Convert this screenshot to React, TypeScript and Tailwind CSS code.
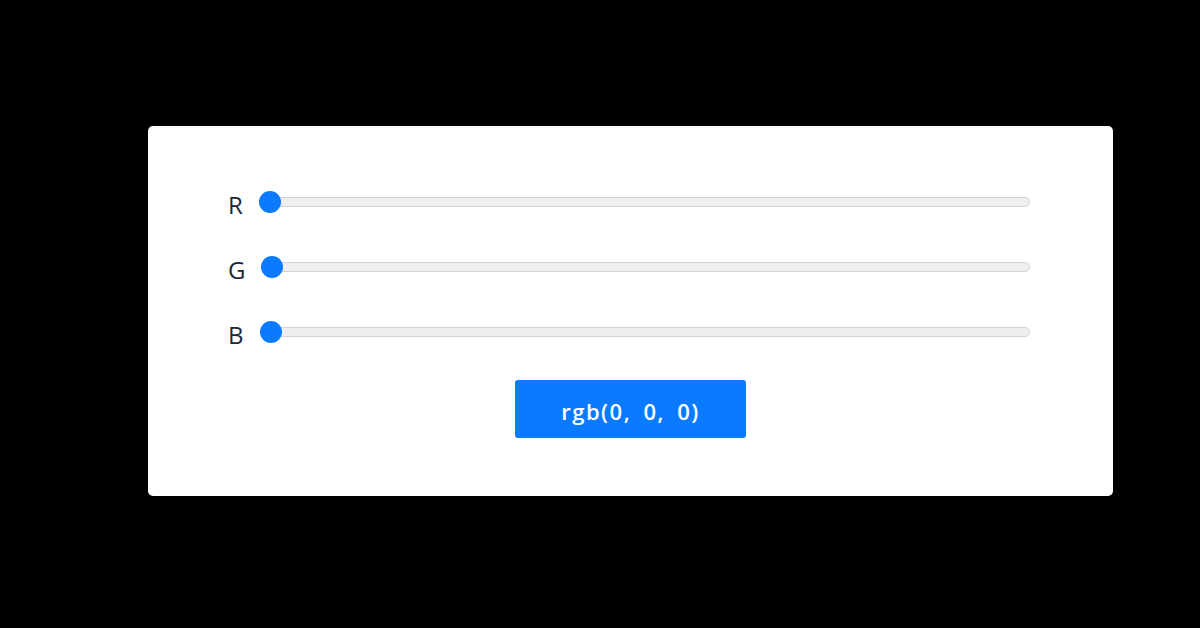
import React, { useState } from 'react';

const CHANNELS = ['R', 'G', 'B'] as const;

function Slider({ label, value }: { label: string; value: number }) {
  const pct = (value / 255) * 100;
  return (
    <div className="flex items-center h-[22px]">
      <span className="text-[24px] leading-none text-[#1d2733] mt-[6px] mr-[16px]">{label}</span>
      <div className="relative flex-1 h-[22px]">
        <div className="absolute left-[10px] right-0 top-[6px] h-[10px] rounded-full bg-[#efefef] border border-[#d4d4d4]" />
        <div
          className="absolute top-0 w-[22px] h-[22px] rounded-full bg-[#0a7bff]"
          style={{ left: `calc(${pct}% - ${pct * 0.22}px)` }}
        />
      </div>
    </div>
  );
}

export default function App() {
  const [rgb] = useState({ R: 0, G: 0, B: 0 });

  return (
    <div className="w-[1200px] h-[628px] bg-black overflow-hidden font-['Open_Sans',sans-serif]">
      <div className="ml-[148px] mt-[126px] w-[965px] h-[370px] bg-white rounded-[5px] pl-[80px] pr-[83px] pt-[65px] flex flex-col">
        <div className="flex flex-col gap-[43px]">
          {CHANNELS.map((c) => (
            <Slider key={c} label={c} value={rgb[c]} />
          ))}
        </div>
        <div className="flex justify-center mt-[37px] pl-[3px]">
          <button className="w-[231px] h-[58px] pt-[5px] rounded-[3px] bg-[#0a7bff] text-white text-[22px] font-semibold tracking-[1.5px] [word-spacing:5px]">
            rgb({rgb.R}, {rgb.G}, {rgb.B})
          </button>
        </div>
      </div>
    </div>
  );
}
